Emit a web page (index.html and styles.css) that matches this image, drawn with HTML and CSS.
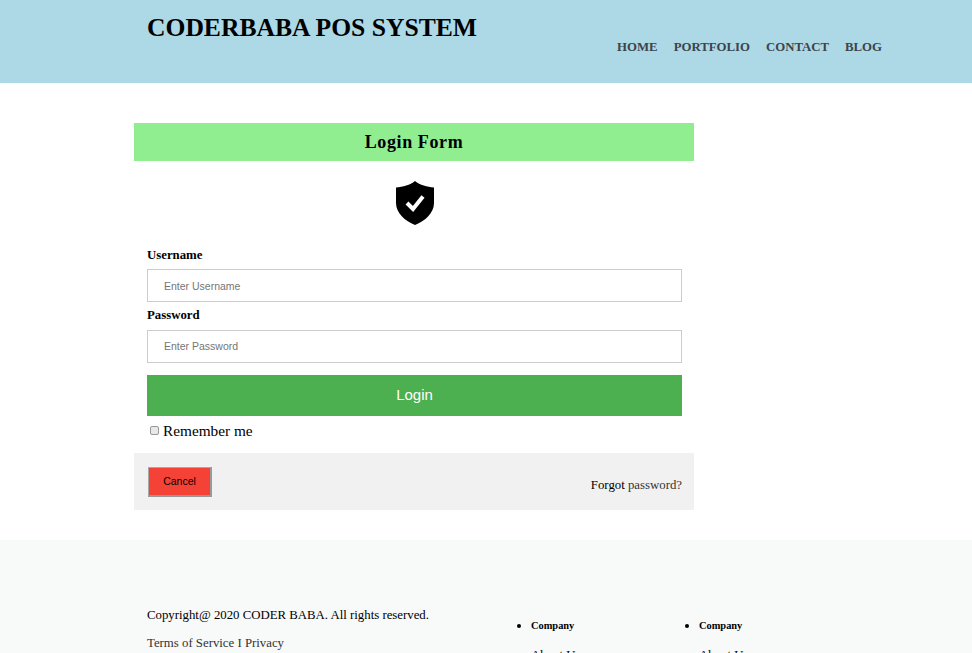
FILE: index.html
```html
<!DOCTYPE html>
<html lang="en">
<head>
<meta charset="UTF-8">
<meta name="viewport" content="width=device-width, initial-scale=1.0">
<title>CoderBaba POS System</title>
<link rel="stylesheet" href="styles.css">
</head>
<body>
<div class="header">
  <div class="header-inner">
    <h1 class="brand">CODERBABA POS SYSTEM</h1>
    <ul class="nav">
      <li><a href="#">HOME</a></li>
      <li><a href="#">PORTFOLIO</a></li>
      <li><a href="#">CONTACT</a></li>
      <li><a href="#">BLOG</a></li>
    </ul>
  </div>
</div>
<div class="main">
  <form class="login">
    <h2 class="login-title">Login Form</h2>
    <div class="avatar">
      <svg width="38" height="44" viewBox="0 0 38 44">
        <path d="M19 0 C24 4 31 6 38 6.500 L38 22 C38 32 29 40 19 44 C9 40 0 32 0 22 L0 6.500 C7 6 14 4 19 0 Z" fill="#000"/>
        <path d="M11 22 L17 28 L27 15.500" fill="none" stroke="#fff" stroke-width="4"/>
      </svg>
    </div>
    <div class="fields">
      <label class="field-label">Username</label>
      <input class="field" type="text" placeholder="Enter Username">
      <label class="field-label">Password</label>
      <input class="field field-pass" type="password" placeholder="Enter Password">
      <button class="btn-login" type="button">Login</button>
      <label class="remember"><input type="checkbox"> Remember me</label>
    </div>
    <div class="login-foot">
      <button class="btn-cancel" type="button">Cancel</button>
      <span class="forgot">Forgot <a href="#">password?</a></span>
    </div>
  </form>
</div>
<div class="footer">
  <div class="footer-inner">
    <div class="copy">
      <p>Copyright@ 2020 CODER BABA. All rights reserved.</p>
      <p class="terms">Terms of Service I Privacy</p>
    </div>
    <ul class="links">
      <li><strong>Company</strong></li>
      <li class="plain">About Us</li>
    </ul>
    <ul class="links">
      <li><strong>Company</strong></li>
      <li class="plain">About Us</li>
    </ul>
  </div>
</div>
</body>
</html>
```

FILE: styles.css
```css
body { margin: 0; font-family: "Liberation Serif", "Times New Roman", serif; background-color: white; color: #000; }
.header { background-color: #add8e6; height: 83px; }
.header-inner { width: 735px; margin-left: 147px; display: flex; justify-content: space-between; }
.brand { margin: 13px 0 0; font-size: 25.6px; line-height: 30px; font-weight: bold; }
.nav { list-style: none; display: flex; gap: 16px; margin: 40px 0 0; padding: 0; font-size: 12.8px; line-height: 15px; font-weight: bold; }
.nav a { color: #3b444b; text-decoration: none; }

.main { padding: 40px 0 30px 134px; }
.login { width: 560px; }
.login-title { margin: 0; height: 38px; line-height: 38px; background-color: #90ee90; text-align: center; font-size: 18px; letter-spacing: 0.6px; }
.avatar { height: 44px; padding: 20px 0 0; display: flex; justify-content: center; margin-left: 1px; }
.fields { padding: 23px 12px 0 13px; }
.field-label { display: block; font-size: 12.8px; font-weight: bold; line-height: 15px; margin-bottom: 6px; }
.field + .field-label { margin-bottom: 7px; }
.field { display: block; box-sizing: border-box; width: 100%; height: 33px; padding: 0 16px; margin-bottom: 6px; border: 1px solid #ccc; font-family: "Liberation Sans", Arial, sans-serif; font-size: 10.5px; }
.field-pass { padding-bottom: 2px; }
.field::placeholder { color: #757575; }
.btn-login { display: block; width: 100%; height: 41px; margin-top: 12px; padding: 0 0 2px; border: none; background-color: #4caf50; color: white; font-family: "Liberation Sans", Arial, sans-serif; font-size: 15px; }
.remember { display: flex; align-items: center; gap: 4px; height: 30px; padding-left: 3px; font-size: 15.3px; }
.remember input { appearance: none; box-sizing: border-box; width: 9px; height: 9px; margin: 0 0 2px; border: 1px solid #999; border-radius: 2px; background-color: #e8e8e8; }
.login-foot { display: flex; justify-content: space-between; align-items: flex-end; height: 57px; margin-top: 7px; padding: 0 12px 13px 14px; box-sizing: border-box; background-color: #f1f1f1; }
.btn-cancel { width: 64px; height: 30px; padding: 0 0 2px; border-style: solid; border-width: 1px 2px 2px 1px; border-color: #a8a8a8 #999 #999 #a8a8a8; background-color: #f44336; color: #000; font-family: "Liberation Sans", Arial, sans-serif; font-size: 10.5px; }
.forgot { font-size: 12.8px; line-height: 14px; margin-bottom: 5px; }
.forgot a { color: #333; text-decoration: none; }

.footer { background-color: #f8f9f9; height: 200px; }
.footer-inner { display: flex; padding: 68px 0 0 147px; }
.copy { width: 336px; font-size: 12.8px; line-height: 14px; }
.copy p { margin: 0 0 14px; }
.terms { color: #333; }
.links { width: 168px; margin: 11px 0 0; padding: 0 0 0 48px; box-sizing: border-box; font-size: 12.8px; line-height: 12px; }
.links strong { font-size: 10.4px; }
.links li { margin-bottom: 16px; }
.links .plain { list-style: none; line-height: 14px; }
```
